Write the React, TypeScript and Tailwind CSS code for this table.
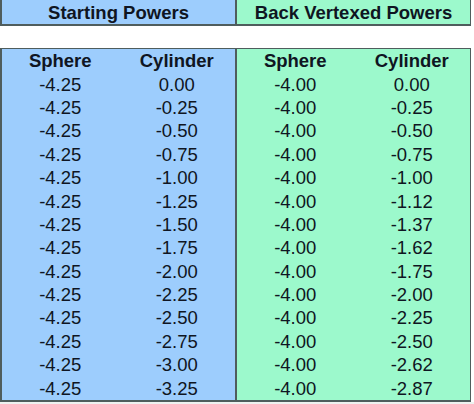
import React from "react";

const rows: [string, string, string, string][] = [
  ["-4.25", "0.00", "-4.00", "0.00"],
  ["-4.25", "-0.25", "-4.00", "-0.25"],
  ["-4.25", "-0.50", "-4.00", "-0.50"],
  ["-4.25", "-0.75", "-4.00", "-0.75"],
  ["-4.25", "-1.00", "-4.00", "-1.00"],
  ["-4.25", "-1.25", "-4.00", "-1.12"],
  ["-4.25", "-1.50", "-4.00", "-1.37"],
  ["-4.25", "-1.75", "-4.00", "-1.62"],
  ["-4.25", "-2.00", "-4.00", "-1.75"],
  ["-4.25", "-2.25", "-4.00", "-2.00"],
  ["-4.25", "-2.50", "-4.00", "-2.25"],
  ["-4.25", "-2.75", "-4.00", "-2.50"],
  ["-4.25", "-3.00", "-4.00", "-2.62"],
  ["-4.25", "-3.25", "-4.00", "-2.87"],
];

function Block({
  bg,
  col1,
  col2,
  extra,
}: {
  bg: string;
  col1: string[];
  col2: string[];
  extra: string;
}) {
  return (
    <div className={`flex flex-col ${bg} ${extra}`}>
      <div className="grid grid-cols-2 h-[23.4px] items-center text-center font-bold">
        <div>Sphere</div>
        <div>Cylinder</div>
      </div>
      {col1.map((v, i) => (
        <div key={i} className="grid grid-cols-2 h-[23.4px] items-center text-center">
          <div>{v}</div>
          <div>{col2[i]}</div>
        </div>
      ))}
    </div>
  );
}

export default function App() {
  return (
    <div
      className="w-[474px] h-[404px] bg-white text-[#0f1522] text-[18.5px] leading-[21px] overflow-hidden"
      style={{ fontFamily: '"Liberation Sans", Arial, sans-serif' }}
    >
      <div className="w-[471px] h-[26px] flex border-l-2 border-r border-b-2 border-[#4f5d5d]">
        <div className="w-[235px] bg-[#9dcdfd] border-r-2 border-[#4f5d5d] flex items-center justify-center font-bold">
          Starting Powers
        </div>
        <div className="flex-1 bg-[#9cf9cc] flex items-center justify-center font-bold">
          Back Vertexed Powers
        </div>
      </div>
      <div className="h-[22px]" />
      <div className="w-[471px] flex border-l-2 border-r border-t border-b-2 border-[#4f5d5d]">
        <Block
          bg="bg-[#9dcdfd]"
          extra="w-[235px] border-r-2 border-[#4f5d5d]"
          col1={rows.map((r) => r[0])}
          col2={rows.map((r) => r[1])}
        />
        <Block
          bg="bg-[#9cf9cc]"
          extra="flex-1"
          col1={rows.map((r) => r[2])}
          col2={rows.map((r) => r[3])}
        />
      </div>
      <div className="h-[2px] bg-[#eef2f0]" />
    </div>
  );
}
